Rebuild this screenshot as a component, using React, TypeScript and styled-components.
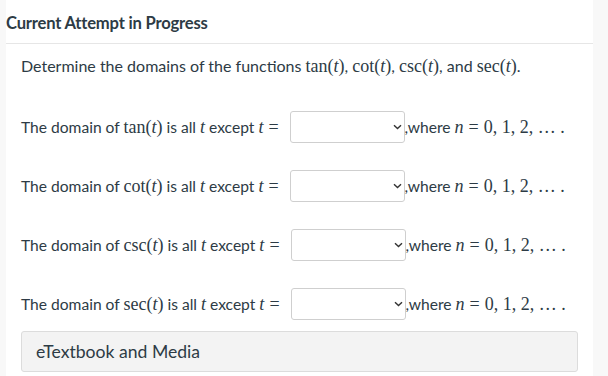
import styled, { createGlobalStyle } from "styled-components"

const GlobalStyle = createGlobalStyle`
  html, body {
    margin: 0;
    padding: 0;
    background: #f8f8f8;
    overflow: hidden;
  }
  body {
    font-family: Lato, "Open Sans", sans-serif;
    color: #2d3b45;
  }
`

const Page = styled.div`
  display: flex;
  height: 376px;
`

const Main = styled.div`
  margin-left: 6px;
  width: 587px;
  background: #fff;
`

const Header = styled.div`
  height: 43px;
  border-bottom: 1px solid #e6e6e6;
  display: flex;
  align-items: center;
`

const Title = styled.h2`
  margin: 0;
  padding-top: 2px;
  font-size: 16.6px;
  font-weight: 700;
  color: #2d3b45;
  letter-spacing: -0.2px;
`

const Body = styled.div`
  padding: 0 15px;
`

const Prompt = styled.p`
  margin: 0;
  padding-top: 11px;
  height: 50px;
  font-size: 16px;
  line-height: 22px;
  color: #2d3b45;
`

const Row = styled.div`
  height: 44px;
  margin-bottom: 15px;
  display: flex;
  align-items: center;
  font-size: 15.6px;
  color: #2d3b45;
  white-space: pre;
`

const Math = styled.span`
  font-family: "Liberation Serif", "DejaVu Serif", serif;
  font-size: 18px;
`

const Var = styled.i`
  font-family: "Liberation Serif", "DejaVu Serif", serif;
  font-style: italic;
  font-size: 18px;
`

const Eq = styled.span`
  font-family: "Liberation Serif", "DejaVu Serif", serif;
  font-size: 18px;
  margin: 0 5px;
`

const Select = styled.div`
  box-sizing: border-box;
  width: 115px;
  height: 32px;
  margin-left: 6px;
  border: 1px solid #cfcfcf;
  border-radius: 3px;
  background: #fff;
  display: flex;
  align-items: center;
  justify-content: flex-end;
  padding-right: 2px;
`

const Media = styled.div`
  box-sizing: border-box;
  margin-top: -10px;
  height: 41px;
  border: 1px solid #dcdcdc;
  border-radius: 3px;
  background: #f3f3f3;
  display: flex;
  align-items: center;
  padding-left: 14px;
  font-size: 17.6px;
  color: #2d3b45;
`

const Chevron = () => (
  <svg width="9" height="6" viewBox="0 0 9 6">
    <path d="M1 1.2 L4.5 4.6 L8 1.2" fill="none" stroke="#333" strokeWidth="1.4" />
  </svg>
)

const Fn = ({ name }: { name: string }) => (
  <Math>
    {name}(<Var>t</Var>)
  </Math>
)

const DomainRow = ({ name }: { name: string }) => (
  <Row>
    The domain of <Fn name={name} /> is all <Var>t</Var> except <Var>t</Var>
    <Eq>=</Eq>
    <Select>
      <Chevron />
    </Select>
    ,where <Var>n</Var>
    <Eq>=</Eq>
    <Math>0, 1, 2, … .</Math>
  </Row>
)

function App() {
  return (
    <Page>
      <GlobalStyle />
      <Main>
        <Header>
          <Title>Current Attempt in Progress</Title>
        </Header>
        <Body>
          <Prompt>
            Determine the domains of the functions <Fn name="tan" />, <Fn name="cot" />,{" "}
            <Fn name="csc" />, and <Fn name="sec" />.
          </Prompt>
          {["tan", "cot", "csc", "sec"].map((f) => (
            <DomainRow key={f} name={f} />
          ))}
          <Media>eTextbook and Media</Media>
        </Body>
      </Main>
    </Page>
  )
}

export default App
